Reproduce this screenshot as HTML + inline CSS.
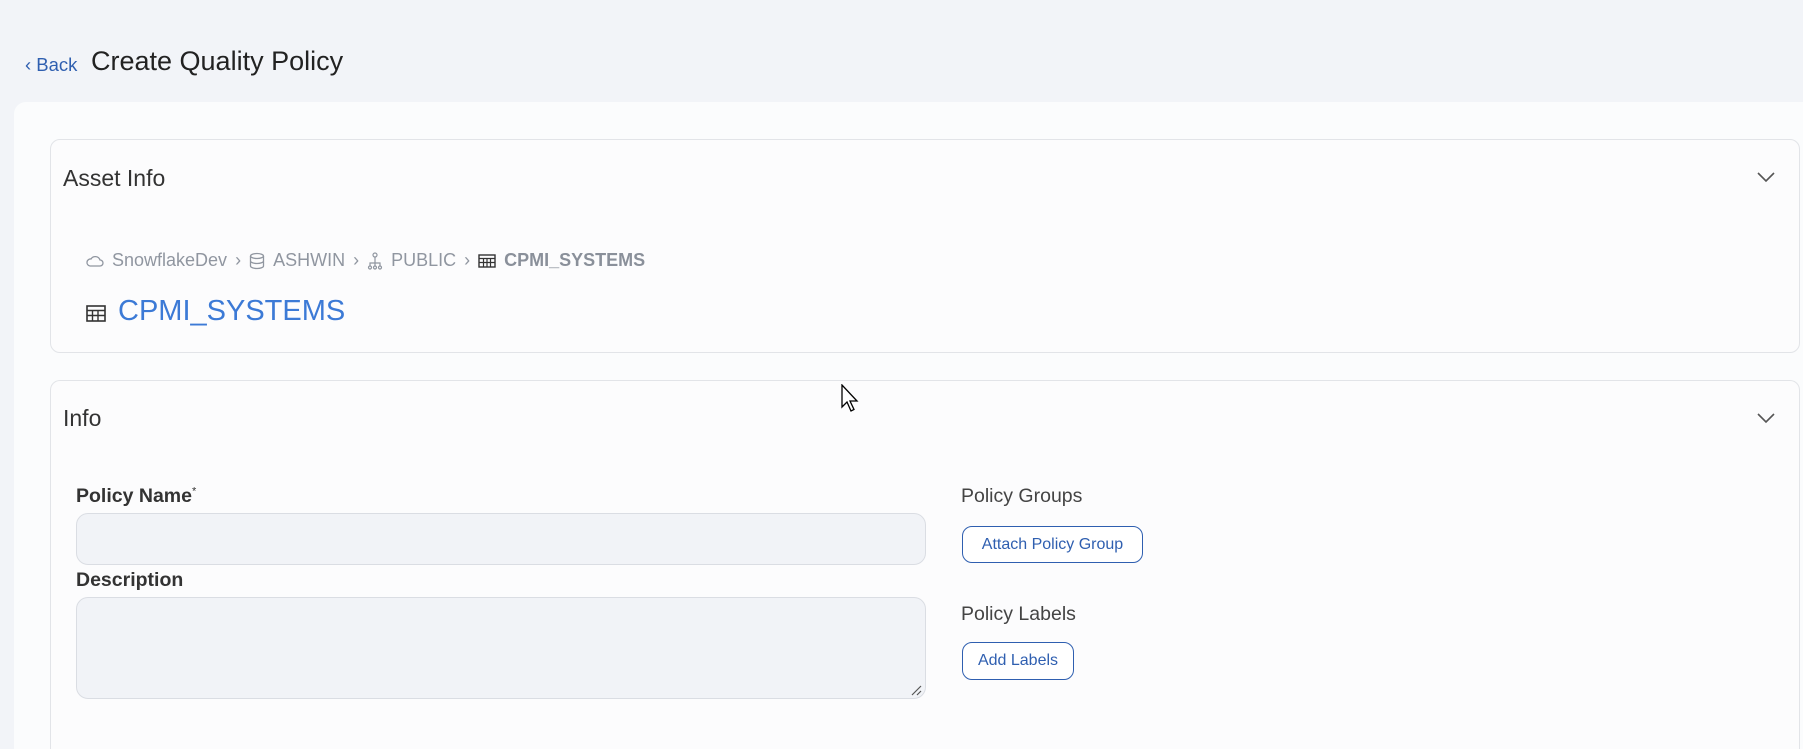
<!DOCTYPE html>
<html style="height:749px;overflow:hidden"><head><style>
*{box-sizing:border-box;margin:0;padding:0}
body{width:1803px;height:749px;overflow:hidden;background:#f2f4f8;font-family:"Liberation Sans",sans-serif;position:relative;color:#222}
.abs{position:absolute}
.panel{left:14px;top:102px;width:1789px;height:647px;background:#fbfcfd;border-radius:12px 0 0 0}
.card{left:50px;width:1750px;border:1px solid #e2e4e8;border-radius:10px;background:#fcfcfd}
.h{font-size:23px;color:#333}
.lbl{font-size:19.5px}
.inp{left:76px;width:850px;background:#f1f3f7;border:1px solid #dadde3;border-radius:12px}
.btn{border:1px solid #2f5fb0;border-radius:10px;color:#2f5fb0;font-size:16px;display:flex;align-items:center;justify-content:center;background:#fff}
.bc{font-size:18px;color:#9096a0;top:250px;display:flex;align-items:center;gap:8px;left:86px}
</style></head><body>
<div class="abs" style="left:25px;top:54px;font-size:18.5px;color:#2f5fb0">‹ Back</div>
<div class="abs" style="left:91px;top:46px;font-size:27px;color:#222">Create Quality Policy</div>
<div class="abs panel"></div>
<div class="abs card" style="top:139px;height:214px"></div>
<div class="abs h" style="left:63px;top:165px">Asset Info</div>
<svg class="abs" style="left:1757px;top:172px" width="18" height="11" viewBox="0 0 18 11"><path d="M1 1l8 8 8-8" fill="none" stroke="#555" stroke-width="1.6"/></svg>
<div class="abs bc">
<svg width="18" height="14" viewBox="0 0 18 14"><path d="M4 12h10a3 3 0 0 0 0-6 5 5 0 0 0-9-1 3.5 3.5 0 0 0-1 7z" fill="none" stroke="#9096a0" stroke-width="1.3"/></svg>
<span>SnowflakeDev</span><span>›</span>
<svg width="16" height="18" viewBox="0 0 16 18"><ellipse cx="8" cy="4" rx="6.5" ry="2.5" fill="none" stroke="#9096a0" stroke-width="1.3"/><path d="M1.5 4v10c0 1.4 3 2.5 6.5 2.5s6.5-1.1 6.5-2.5V4M1.5 9c0 1.4 3 2.5 6.5 2.5s6.5-1.1 6.5-2.5" fill="none" stroke="#9096a0" stroke-width="1.3"/></svg>
<span>ASHWIN</span><span>›</span>
<svg width="16" height="18" viewBox="0 0 16 18"><circle cx="8" cy="3" r="2" fill="none" stroke="#9096a0" stroke-width="1.2"/><path d="M8 5v5M3 14v-3h10v3M8 10v4" fill="none" stroke="#9096a0" stroke-width="1.2"/><circle cx="3" cy="15.5" r="1.5" fill="none" stroke="#9096a0" stroke-width="1.2"/><circle cx="8" cy="15.5" r="1.5" fill="none" stroke="#9096a0" stroke-width="1.2"/><circle cx="13" cy="15.5" r="1.5" fill="none" stroke="#9096a0" stroke-width="1.2"/></svg>
<span>PUBLIC</span><span>›</span>
<svg width="18" height="14" viewBox="0 0 18 14"><rect x="1" y="1" width="16" height="12" fill="none" stroke="#333" stroke-width="1.4"/><path d="M1 4.5h16M1 8.5h16M5.5 4.5v8.5M9 4.5v8.5M12.5 4.5v8.5" stroke="#333" stroke-width="1.2"/></svg>
<span style="font-weight:bold;color:#8a909a">CPMI_SYSTEMS</span>
</div>
<svg class="abs" style="left:86px;top:305px" width="20" height="17" viewBox="0 0 20 17"><rect x="1" y="1" width="18" height="15" fill="none" stroke="#333" stroke-width="1.6"/><path d="M1 5.5h18M1 10.5h18M6.5 5.5v10.5M12 5.5v10.5" stroke="#333" stroke-width="1.4"/></svg>
<div class="abs" style="left:118px;top:295px;font-size:29px;color:#3c7ad6">CPMI_SYSTEMS</div>
<div class="abs card" style="top:380px;height:369px;border-bottom:none;border-radius:10px 10px 0 0"></div>
<div class="abs h" style="left:63px;top:405px">Info</div>
<svg class="abs" style="left:1757px;top:413px" width="18" height="11" viewBox="0 0 18 11"><path d="M1 1l8 8 8-8" fill="none" stroke="#555" stroke-width="1.6"/></svg>
<div class="abs lbl" style="left:76px;top:485px;font-weight:bold;color:#333">Policy Name<sup style="font-size:11px;font-weight:normal">*</sup></div>
<div class="abs inp" style="top:513px;height:52px"></div>
<div class="abs lbl" style="left:76px;top:569px;font-weight:bold;color:#333">Description</div>
<div class="abs inp" style="top:597px;height:102px"></div>
<svg class="abs" style="left:910px;top:684px" width="12" height="12"><path d="M2 11L11 2M7 11l4-4" stroke="#555" stroke-width="1.2"/></svg>
<div class="abs lbl" style="left:961px;top:485px;color:#444">Policy Groups</div>
<div class="abs btn" style="left:962px;top:526px;width:181px;height:37px">Attach Policy Group</div>
<div class="abs lbl" style="left:961px;top:603px;color:#444">Policy Labels</div>
<div class="abs btn" style="left:962px;top:642px;width:112px;height:38px">Add Labels</div>
<svg class="abs" style="left:841px;top:384px" width="20" height="28" viewBox="0 0 20 28"><path d="M1 1v22l5-5 4 9 3-1.5-4-8.5h7z" fill="#fff" stroke="#000" stroke-width="1.3"/></svg>
</body></html>
